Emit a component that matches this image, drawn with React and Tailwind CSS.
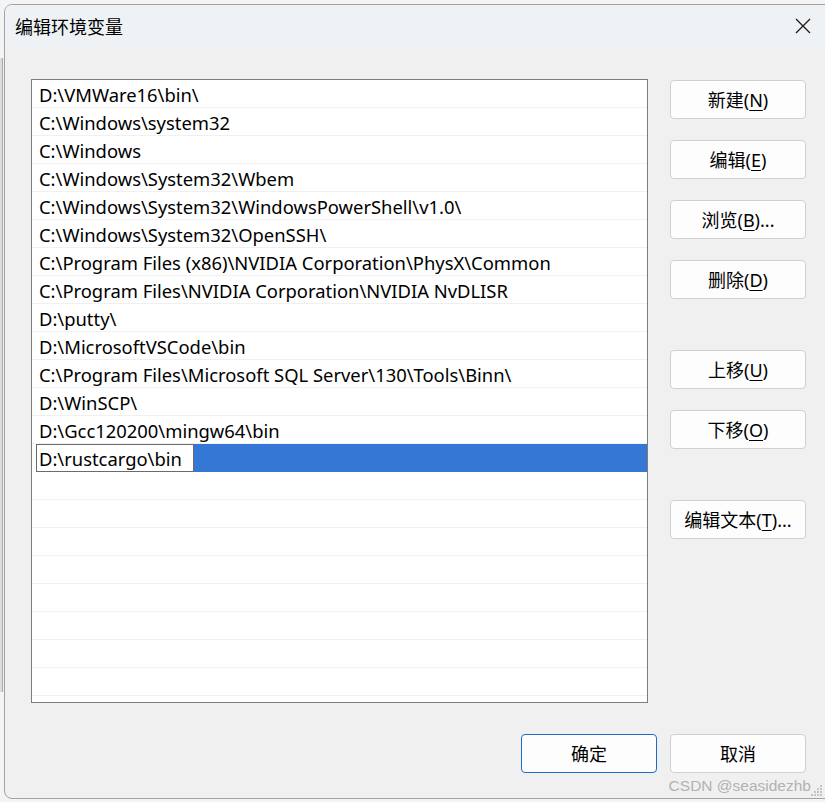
const paths = [
  "D:\\VMWare16\\bin\\",
  "C:\\Windows\\system32",
  "C:\\Windows",
  "C:\\Windows\\System32\\Wbem",
  "C:\\Windows\\System32\\WindowsPowerShell\\v1.0\\",
  "C:\\Windows\\System32\\OpenSSH\\",
  "C:\\Program Files (x86)\\NVIDIA Corporation\\PhysX\\Common",
  "C:\\Program Files\\NVIDIA Corporation\\NVIDIA NvDLISR",
  "D:\\putty\\",
  "D:\\MicrosoftVSCode\\bin",
  "C:\\Program Files\\Microsoft SQL Server\\130\\Tools\\Binn\\",
  "D:\\WinSCP\\",
  "D:\\Gcc120200\\mingw64\\bin",
];

const emptyRows = Array.from({ length: 10 });

const WinButton = ({ label, hotkey, tail = "", primary = false }) => (
  <button
    className={
      "w-[136px] h-[39px] shrink-0 rounded-[4px] border bg-[#fdfdfd] text-black text-[18px] leading-none " +
      (primary ? "border-[#1a6fc4]" : "border-[#d0d0d0]")
    }
  >
    {label}
    {hotkey && (
      <>
        (<span className="underline underline-offset-[3px] decoration-1">{hotkey}</span>){tail}
      </>
    )}
  </button>
);

const Grip = () => (
  <svg width="12" height="12" viewBox="0 0 12 12">
    {[
      [9, 0],
      [6, 3],
      [9, 3],
      [3, 6],
      [6, 6],
      [9, 6],
      [0, 9],
      [3, 9],
      [6, 9],
      [9, 9],
    ].map(([x, y]) => (
      <rect key={`${x}-${y}`} x={x} y={y} width="2" height="2" fill="#c4c4c4" />
    ))}
  </svg>
);

export default function App() {
  return (
    <div className="relative w-[825px] h-[802px] overflow-hidden flex bg-[#f4f4f4] font-['Noto_Sans','Noto_Sans_CJK_SC',sans-serif]">
      {/* edge of the window behind */}
      <div className="w-[4px] shrink-0 flex flex-col">
        <div className="h-[58px]" />
        <div className="h-[634px] flex">
          <div className="w-[2px] bg-[#dcdcdc]" />
          <div className="w-[1px] bg-[#aaaaaa]" />
          <div className="w-[1px] bg-[#eeeeee]" />
        </div>
      </div>

      <div className="flex-1 min-w-0 mt-[4px] mb-[3px] -mr-[20px] border border-[#a3a3a3] rounded-l-[8px] overflow-hidden flex flex-col bg-[#f0f0f0]">
        {/* title bar */}
        <div className="h-[43px] shrink-0 flex items-center justify-between bg-[#eef2f5] pl-[10px] pr-[33px]">
          <span className="text-[18px] text-black font-['Noto_Sans_CJK_SC',sans-serif]">编辑环境变量</span>
          <svg width="16" height="16" viewBox="0 0 16 16" className="mt-[-1px]">
            <path d="M1 1 L15 15 M15 1 L1 15" stroke="#1a1a1a" strokeWidth="1.3" fill="none" />
          </svg>
        </div>

        {/* body */}
        <div className="flex-1 pl-[26px] pt-[31px]">
          <div className="w-[775px] flex flex-col">
            <div className="flex">
              <div className="w-[617px] h-[624px] shrink-0 border border-[#7d7d7d] bg-white overflow-hidden text-[18.4px] text-black">
                {paths.map((p) => (
                  <div key={p} className="h-[28px] border-b border-[#f0f0f0] pl-[7px] leading-[29px] whitespace-nowrap overflow-hidden">
                    {p}
                  </div>
                ))}
                <div className="h-[28px] flex pl-[4px]">
                  <div className="w-[158px] h-full border border-[#6b6b6b] bg-white pl-[2px] leading-[27px] whitespace-nowrap overflow-hidden">
                    D:\rustcargo\bin
                  </div>
                  <div className="flex-1 bg-[#3477d4]" />
                </div>
                {emptyRows.map((_, i) => (
                  <div key={i} className="h-[28px] border-b border-[#f0f0f0]" />
                ))}
              </div>

              <div className="ml-[22px] mt-[1px] flex flex-col">
                <div className="flex flex-col gap-[21px]">
                  <WinButton label="新建" hotkey="N" />
                  <WinButton label="编辑" hotkey="E" />
                  <WinButton label="浏览" hotkey="B" tail="..." />
                  <WinButton label="删除" hotkey="D" />
                </div>
                <div className="mt-[51px] flex flex-col gap-[21px]">
                  <WinButton label="上移" hotkey="U" />
                  <WinButton label="下移" hotkey="O" />
                </div>
                <div className="mt-[51px]">
                  <WinButton label="编辑文本" hotkey="T" tail="..." />
                </div>
              </div>
            </div>

            <div className="mt-[31px] flex justify-end gap-[13px]">
              <WinButton label="确定" primary />
              <WinButton label="取消" />
            </div>
          </div>
        </div>
      </div>

      {/* watermark + size grip */}
      <div className="absolute right-[14px] bottom-[9px] text-[15.5px] leading-none text-[#b2b2b2] font-['Liberation_Sans',sans-serif]">
        CSDN @seasidezhb
      </div>
      <div className="absolute right-[2px] bottom-[5px]">
        <Grip />
      </div>
    </div>
  );
}
